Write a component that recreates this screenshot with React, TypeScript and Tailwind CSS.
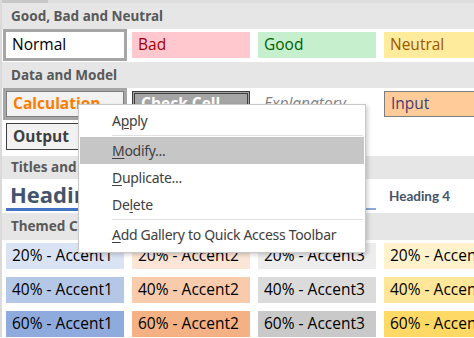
import React from 'react';

const headFont = { fontFamily: '"Noto Sans", "Open Sans", sans-serif' };

const SectionHeader: React.FC<{ title: string; h: string }> = ({ title, h }) => (
  <div className={`${h} flex items-center bg-[#e6e6e6] pl-[9px] text-[13.5px] font-bold text-[#595959] whitespace-nowrap`} style={headFont}>
    {title}
  </div>
);

const cellBase = 'h-[26px] w-[118px] shrink-0 flex items-center px-[6px] text-[15.5px] leading-none whitespace-nowrap overflow-hidden';

const accents = [
  { pct: '20%', colors: ['bg-[#dae3f3]', 'bg-[#fbe5d6]', 'bg-[#ededed]', 'bg-[#fff2cc]'] },
  { pct: '40%', colors: ['bg-[#b4c7e7]', 'bg-[#f8cbad]', 'bg-[#dbdbdb]', 'bg-[#ffe699]'] },
  { pct: '60%', colors: ['bg-[#8faadc]', 'bg-[#f4b183]', 'bg-[#c9c9c9]', 'bg-[#ffd966]'] },
];

const MenuItem: React.FC<{ pre: string; u: string; post: string; active?: boolean }> = ({ pre, u, post, active }) => (
  <div className={`h-[27px] flex items-center pl-[32px] mx-[1px] ${active ? 'bg-[#c6c6c6]' : ''}`}>
    <span className="text-[14px] text-[#404040] leading-none tracking-[-0.3px] whitespace-nowrap">
      {pre}
      <span className="underline underline-offset-2">{u}</span>
      {post}
    </span>
  </div>
);

const Separator = () => (
  <div className="h-[3px] flex items-center pl-[33px] pr-[2px]">
    <div className="h-px w-full bg-[#e1e1e1]" />
  </div>
);

export default function App() {
  return (
    <div className="relative w-[474px] h-[338px] overflow-hidden bg-white" style={{ fontFamily: '"Open Sans", sans-serif' }}>
      <div className="flex flex-col border-l-[2px] border-[#dadada]">
        {/* top edge */}
        <div className="h-[3px] flex">
          <div className="w-[46px] bg-[#c8c8c8]" />
          <div className="flex-1 bg-[#dedede]" />
        </div>

        <SectionHeader title="Good, Bad and Neutral" h="h-[26px]" />
        <div className="h-[33px] flex gap-[8px] pl-[4px] pt-[3px]">
          <div className={`${cellBase} bg-white text-black ring-[3px] ring-[#a6a6a6]`}>Normal</div>
          <div className={`${cellBase} bg-[#ffc7ce] text-[#9c0006]`}>Bad</div>
          <div className={`${cellBase} bg-[#c6efce] text-[#006100]`}>Good</div>
          <div className={`${cellBase} bg-[#ffeb9c] text-[#9c5700]`}>Neutral</div>
        </div>

        <SectionHeader title="Data and Model" h="h-[26px]" />
        <div className="h-[32px] flex gap-[8px] pl-[4px] pt-[3px]">
          <div className={`${cellBase} bg-[#f2f2f2] text-[#fa7d00] font-bold border border-[#7f7f7f] ring-[3px] ring-[#a6a6a6]`}>Calculation</div>
          <div className={`${cellBase} bg-[#a5a5a5] text-white font-bold border-[3px] border-double border-[#3f3f3f]`}>Check Cell</div>
          <div className={`${cellBase} text-[#7f7f7f] italic`}>Explanatory</div>
          <div className={`${cellBase} bg-[#ffcc99] text-[#3f3f76] border border-[#7f7f7f]`}>Input</div>
        </div>
        <div className="h-[36px] flex gap-[8px] pl-[4px] pt-[3px]">
          <div className={`${cellBase} !h-[27px] bg-[#f2f2f2] text-[#3f3f3f] font-bold border border-[#3f3f3f]`}>Output</div>
        </div>

        <SectionHeader title="Titles and Headings" h="h-[23px]" />
        <div className="h-[34px] flex gap-[8px] pl-[4px] pt-[2px]">
          <div className="h-[30px] w-[118px] shrink-0 flex items-center px-[4px] border-b-[3px] border-[#4472c4] text-[22px] font-bold text-[#44546a] whitespace-nowrap overflow-hidden">
            Heading 1
          </div>
          <div className="h-[30px] w-[118px] shrink-0 flex items-center px-[4px] border-b-[3px] border-[#a9c4eb] text-[17px] font-bold text-[#44546a] whitespace-nowrap overflow-hidden">
            Heading 2
          </div>
          <div className="h-[29px] w-[118px] shrink-0 flex items-center px-[4px] border-b-[2px] border-[#8eaadb] text-[15px] font-bold text-[#44546a] whitespace-nowrap overflow-hidden">
            Heading 3
          </div>
          <div className="h-[30px] w-[118px] shrink-0 flex items-center px-[5px] text-[13.5px] font-bold text-[#44546a] whitespace-nowrap" style={{ fontFamily: 'Lato, sans-serif' }}>
            Heading 4
          </div>
        </div>

        <SectionHeader title="Themed Cell Styles" h="h-[27px]" />
        <div className="flex flex-col gap-[8px] pt-[3px]">
          {accents.map((row) => (
            <div key={row.pct} className="flex gap-[8px] pl-[4px]">
              {row.colors.map((c, i) => (
                <div key={i} className={`${cellBase} ${c} text-black`}>
                  {row.pct} - Accent{i + 1}
                </div>
              ))}
            </div>
          ))}
        </div>
      </div>

      {/* context menu */}
      <div
        className="absolute left-[78px] top-[104px] w-[288px] h-[149px] bg-white border border-[#c8c8c8] shadow-[2px_2px_4px_rgba(0,0,0,0.18)] pt-[2px]"
        style={headFont}
      >
        <MenuItem pre="A" u="p" post="ply" />
        <Separator />
        <MenuItem pre="" u="M" post="odify..." active />
        <MenuItem pre="" u="D" post="uplicate..." />
        <MenuItem pre="De" u="l" post="ete" />
        <Separator />
        <MenuItem pre="" u="A" post="dd Gallery to Quick Access Toolbar" />
      </div>
    </div>
  );
}
